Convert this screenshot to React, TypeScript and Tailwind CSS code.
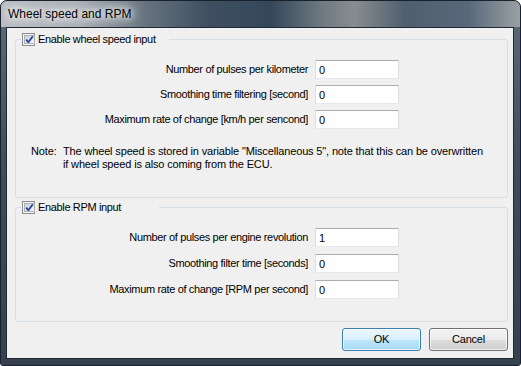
import React from "react";

const font = "font-['Liberation_Sans',Arial,sans-serif]";

function CheckBox() {
    return (
        <span className="w-[13px] h-[13px] shrink-0 border border-[#8e8f8f] bg-[#f4f4f4] p-[1px] flex">
            <span className="flex-1 border border-[#aeb3b9] bg-[linear-gradient(135deg,#cbcfd5_0%,#f6f6f6_100%)] flex items-center justify-center">
                <svg width="9" height="9" viewBox="0 0 9 9">
                    <path d="M1.2 4.6 L3.4 7.2 L7.8 1.2" fill="none" stroke="#22479a" strokeWidth="1.8" strokeLinejoin="round" />
                </svg>
            </span>
        </span>
    );
}

function Field({ label, value }: { label: string; value: string }) {
    return (
        <div className="flex items-center h-[19px]">
            <div className="w-[292px] text-right whitespace-nowrap">{label}</div>
            <input
                readOnly
                defaultValue={value}
                className="ml-[7px] w-[84px] h-[19px] bg-white border border-t-[#abadb3] border-x-[#dbdfe6] border-b-[#e3e9ef] pl-[3px] outline-none text-[11px] tracking-[-0.35px]"
            />
        </div>
    );
}

function GroupBox({ title, width, height, children }: { title: string; width: string; height: string; children: React.ReactNode }) {
    return (
        <fieldset className={`ml-[8px] w-[493px] ${height} border border-[#d5dfe5] rounded-[3px]`}>
            <legend className={`ml-[5px] pl-px ${width}`}>
                <span className="flex items-center h-[14px]">
                    <CheckBox />
                    <span className="ml-[3px] whitespace-nowrap">{title}</span>
                </span>
            </legend>
            {children}
        </fieldset>
    );
}

export default function App() {
    const btn = "w-[79px] h-[23px] rounded-[3px] border text-[11px] tracking-[-0.2px] text-black shadow-[inset_0_0_0_1px_rgba(255,255,255,0.7)]";

    return (
        <div className={`w-[521px] h-[366px] flex flex-col bg-[#3e4b5a] border border-[#18212c] rounded-t-[7px] rounded-b-[3px] overflow-hidden ${font} text-[11px] tracking-[-0.35px] text-black`}>
            <div className="h-[26px] shrink-0 flex items-center pl-[7px] bg-[linear-gradient(to_right,#b9bec3_0%,#a9b0b6_15%,#66727e_28%,#3f4f60_40%,#34475a_52%,#6f7a82_62%,#878d8f_68%,#4f5f6e_78%,#58687a_90%,#9aa0a4_100%)]">
                <span className="text-[12px] tracking-normal text-black [text-shadow:0_0_6px_#fff,0_0_10px_#fff,0_0_14px_#fff]">
                    Wheel speed and RPM
                </span>
            </div>
            <div className="flex-1 flex pl-[5px] pr-[6px] pb-[6px] bg-[linear-gradient(to_bottom,#5a6673_0%,#3f4c5a_40%,#35414f_100%)]">
                <div className="flex-1 flex flex-col border border-[#1f2833] bg-[#f0f0f0]">
                    <div className="mt-[4px]">
                        <GroupBox title="Enable wheel speed input" width="w-[148px]" height="h-[166px]">
                            <div className="mt-[14px] flex flex-col gap-[6px]">
                                <Field label="Number of pulses per kilometer" value="0" />
                                <Field label="Smoothing time filtering [second]" value="0" />
                                <Field label="Maximum rate of change [km/h per sencond]" value="0" />
                            </div>
                            <div className="mt-[16px] ml-[15px] flex leading-[13px] tracking-[-0.15px]">
                                <div className="w-[32px]">Note:</div>
                                <div className="whitespace-nowrap">
                                    The wheel speed is stored in variable &quot;Miscellaneous 5&quot;, note that this can be overwritten
                                    <br />
                                    if wheel speed is also coming from the ECU.
                                </div>
                            </div>
                        </GroupBox>
                    </div>
                    <div className="mt-[2px]">
                        <GroupBox title="Enable RPM input" width="w-[138px]" height="h-[122px]">
                            <div className="mt-[14px] flex flex-col gap-[7px]">
                                <Field label="Number of pulses per engine revolution" value="1" />
                                <Field label="Smoothing filter time [seconds]" value="0" />
                                <Field label="Maximum rate of change [RPM per second]" value="0" />
                            </div>
                        </GroupBox>
                    </div>
                    <div className="mt-[6px] flex justify-end gap-[8px] pr-[5px]">
                        <button className={`${btn} border-[#3c7fb1] bg-[linear-gradient(to_bottom,#eaf6fd_0%,#d9f0fc_50%,#bee6fd_51%,#a7d9f5_100%)]`}>
                            OK
                        </button>
                        <button className={`${btn} border-[#707070] bg-[linear-gradient(to_bottom,#f2f2f2_0%,#ebebeb_50%,#dddddd_51%,#cfcfcf_100%)]`}>
                            Cancel
                        </button>
                    </div>
                </div>
            </div>
        </div>
    );
}
